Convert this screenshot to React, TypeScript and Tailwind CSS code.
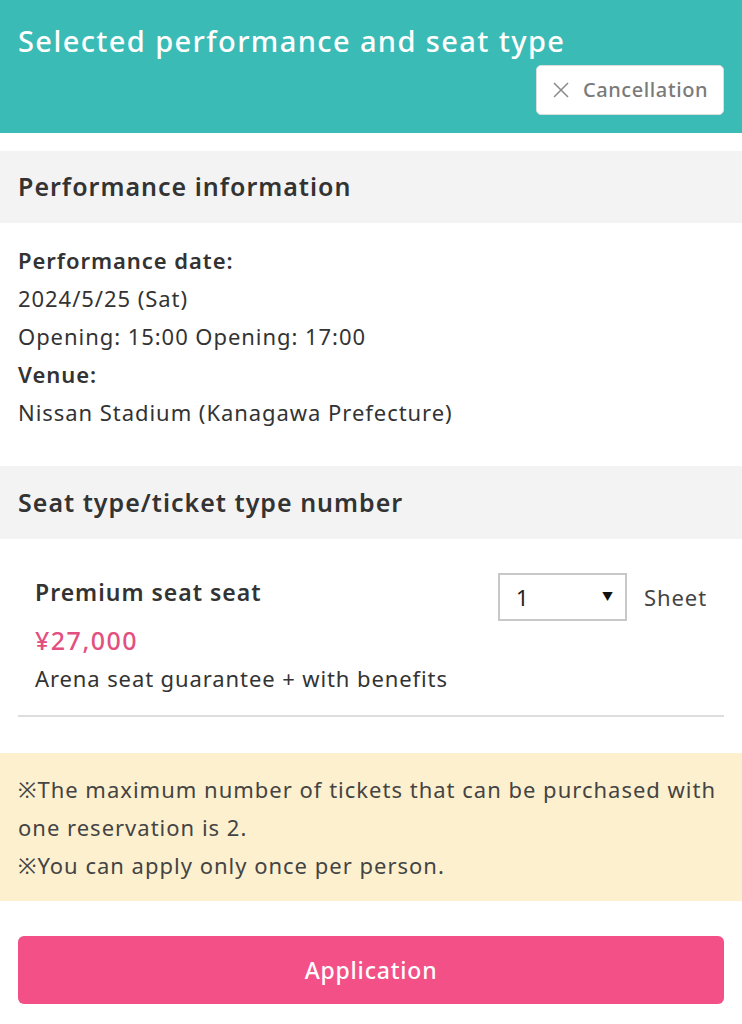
import React from "react";

export default function App() {
  return (
    <div className="w-[742px] min-h-[1024px] bg-white text-[#333333]" style={{ fontFamily: '"Noto Sans", "Noto Sans CJK JP", sans-serif' }}>
      <header className="bg-[#3bbbb5] h-[133px] px-[18px] pt-[19px] flex flex-col">
        <h1 className="text-white text-[29px] leading-[44px] font-medium tracking-[1.4px]">
          Selected performance and seat type
        </h1>
        <div className="flex justify-end mt-[2px]">
          <button className="h-[50px] w-[188px] bg-white rounded-[5px] border border-[#dddddd] flex items-center justify-center gap-[13px] text-[#7a7a7a] text-[20px] font-medium tracking-[0.6px]">
            <svg width="18" height="18" viewBox="0 0 18 18" fill="none" stroke="#8a8a8a" strokeWidth="1.5">
              <path d="M2 2 L16 16 M16 2 L2 16" />
            </svg>
            <span>Cancellation</span>
          </button>
        </div>
      </header>

      <div className="h-[18px]" />

      <section>
        <div className="bg-[#f3f3f3] h-[72px] px-[18px] flex items-center">
          <h2 className="text-[25px] font-semibold text-[#333333] tracking-[1px]">Performance information</h2>
        </div>
        <div className="px-[18px] pt-[18px] pb-[35px] text-[22px] leading-[38px] text-[#333333] tracking-[0.95px]">
          <div className="font-semibold">Performance date:</div>
          <div>2024/5/25 (Sat)</div>
          <div>Opening: 15:00 Opening: 17:00</div>
          <div className="font-semibold">Venue:</div>
          <div>Nissan Stadium (Kanagawa Prefecture)</div>
        </div>
      </section>

      <section>
        <div className="bg-[#f3f3f3] h-[73px] px-[18px] flex items-center">
          <h2 className="text-[25px] font-semibold text-[#333333] tracking-[1px]">Seat type/ticket type number</h2>
        </div>
        <div className="mx-[18px] border-b-2 border-[#dddddd] pl-[17px] pr-[17px] pt-[34px] pb-[18px] flex justify-between items-start">
          <div className="flex flex-col">
            <div className="text-[23px] font-semibold leading-[38px] tracking-[1px]">Premium seat seat</div>
            <div className="text-[25px] font-medium leading-[38px] mt-[10px] text-[#e2507f] tracking-[1.5px]">¥27,000</div>
            <div className="text-[22px] leading-[38px] tracking-[0.9px]">Arena seat guarantee + with benefits</div>
          </div>
          <div className="flex items-center gap-[17px]">
            <div className="w-[129px] h-[48px] border-2 border-[#c8c8c8] flex items-center justify-between pl-[16px] pr-[12px] text-[22px] text-[#222222]">
              <span>1</span>
              <span className="text-[11px] text-[#111111]">▼</span>
            </div>
            <span className="text-[22px] text-[#444444] tracking-[0.9px]">Sheet</span>
          </div>
        </div>
      </section>

      <div className="h-[36px]" />

      <div className="bg-[#fdf0cf] px-[18px] pt-[17px] pb-[17px] text-[22px] leading-[38px] text-[#444444] tracking-[1px]">
        <div>※The maximum number of tickets that can be purchased with one reservation is 2.</div>
        <div>※You can apply only once per person.</div>
      </div>

      <div className="px-[18px] pt-[35px]">
        <button className="w-full h-[68px] rounded-[6px] bg-[#f25086] text-white text-[23px] font-medium tracking-[0.8px]">
          Application
        </button>
      </div>
    </div>
  );
}
